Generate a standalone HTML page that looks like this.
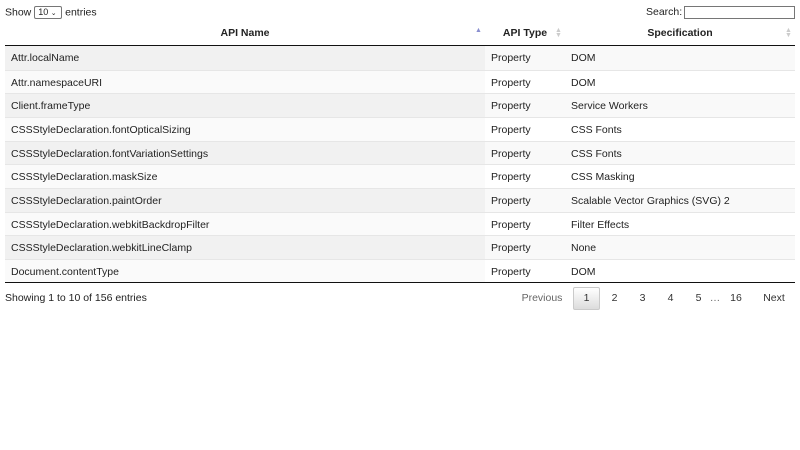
<!DOCTYPE html>
<html><head><style>
*{margin:0;padding:0;box-sizing:border-box}
body{width:800px;height:450px;background:#fff;font-family:"Liberation Sans",sans-serif;font-size:10.5px;color:#222;position:relative;overflow:hidden}
.a{position:absolute;white-space:nowrap}
.r{position:absolute;left:5px;width:790px;height:24px;line-height:25px;border-top:1px solid #e6e6e6}
.r div{position:absolute;top:0;height:100%;padding-left:6px}
.c1{left:0;width:480px}.c2{left:480px;width:80px}.c3{left:560px;width:230px}
.o{background:#f9f9f9}.o .c1{background:#f1f1f1}
.e{background:#fff}.e .c1{background:#fafafa}
.h{position:absolute;top:21px;height:24px;line-height:24px;font-weight:bold;text-align:center}
.ic{position:absolute;font-size:7px;color:#ccc;line-height:5px}
.pg{position:absolute;top:287px;height:23px;line-height:23px;text-align:center;color:#333}
</style></head><body>
<div class="a" style="left:5px;top:6px">Show <span style="display:inline-block;border:1px solid #767676;border-radius:2px;width:28px;height:13px;font-size:9px;line-height:11px;padding-left:3px;vertical-align:middle">10 <span style="font-size:7px">&#8964;</span></span> entries</div>
<div class="a" style="left:646px;top:6px">Search:</div>
<div class="a" style="left:684px;top:6px;width:111px;height:13px;border:1px solid #767676"></div>
<div class="h" style="left:5px;width:480px">API Name</div>
<div class="h" style="left:485px;width:80px">API Type</div>
<div class="h" style="left:565px;width:230px">Specification</div>
<div class="ic" style="left:475px;top:28px;color:#8a8fd0">&#9650;</div>
<div class="ic" style="left:555px;top:28px">&#9650;<br>&#9660;</div>
<div class="ic" style="left:785px;top:28px">&#9650;<br>&#9660;</div>
<div class="a" style="left:5px;top:45px;width:790px;height:1px;background:#111"></div>
<div class="r o" style="top:46px;border-top:none"><div class="c1">Attr.localName</div><div class="c2">Property</div><div class="c3">DOM</div></div>
<div class="r e" style="top:70px"><div class="c1">Attr.namespaceURI</div><div class="c2">Property</div><div class="c3">DOM</div></div>
<div class="r o" style="top:93px"><div class="c1">Client.frameType</div><div class="c2">Property</div><div class="c3">Service Workers</div></div>
<div class="r e" style="top:117px"><div class="c1">CSSStyleDeclaration.fontOpticalSizing</div><div class="c2">Property</div><div class="c3">CSS Fonts</div></div>
<div class="r o" style="top:141px"><div class="c1">CSSStyleDeclaration.fontVariationSettings</div><div class="c2">Property</div><div class="c3">CSS Fonts</div></div>
<div class="r e" style="top:164px"><div class="c1">CSSStyleDeclaration.maskSize</div><div class="c2">Property</div><div class="c3">CSS Masking</div></div>
<div class="r o" style="top:188px"><div class="c1">CSSStyleDeclaration.paintOrder</div><div class="c2">Property</div><div class="c3">Scalable Vector Graphics (SVG) 2</div></div>
<div class="r e" style="top:212px"><div class="c1">CSSStyleDeclaration.webkitBackdropFilter</div><div class="c2">Property</div><div class="c3">Filter Effects</div></div>
<div class="r o" style="top:235px"><div class="c1">CSSStyleDeclaration.webkitLineClamp</div><div class="c2">Property</div><div class="c3">None</div></div>
<div class="r e" style="top:259px"><div class="c1">Document.contentType</div><div class="c2">Property</div><div class="c3">DOM</div></div>
<div class="a" style="left:5px;top:282px;width:790px;height:1px;background:#111"></div>
<div class="a" style="left:5px;top:292px">Showing 1 to 10 of 156 entries</div>
<div class="pg" style="left:518px;width:48px;color:#666">Previous</div>
<div class="pg" style="left:573px;width:27px;background:linear-gradient(#fff,#dcdcdc);border:1px solid #cacaca;border-radius:2px;line-height:21px">1</div>
<div class="pg" style="left:601px;width:27px">2</div>
<div class="pg" style="left:629px;width:27px">3</div>
<div class="pg" style="left:657px;width:27px">4</div>
<div class="pg" style="left:685px;width:27px">5</div>
<div class="pg" style="left:707px;width:16px;color:#666">…</div>
<div class="pg" style="left:722px;width:28px">16</div>
<div class="pg" style="left:755px;width:38px">Next</div>
</body></html>
